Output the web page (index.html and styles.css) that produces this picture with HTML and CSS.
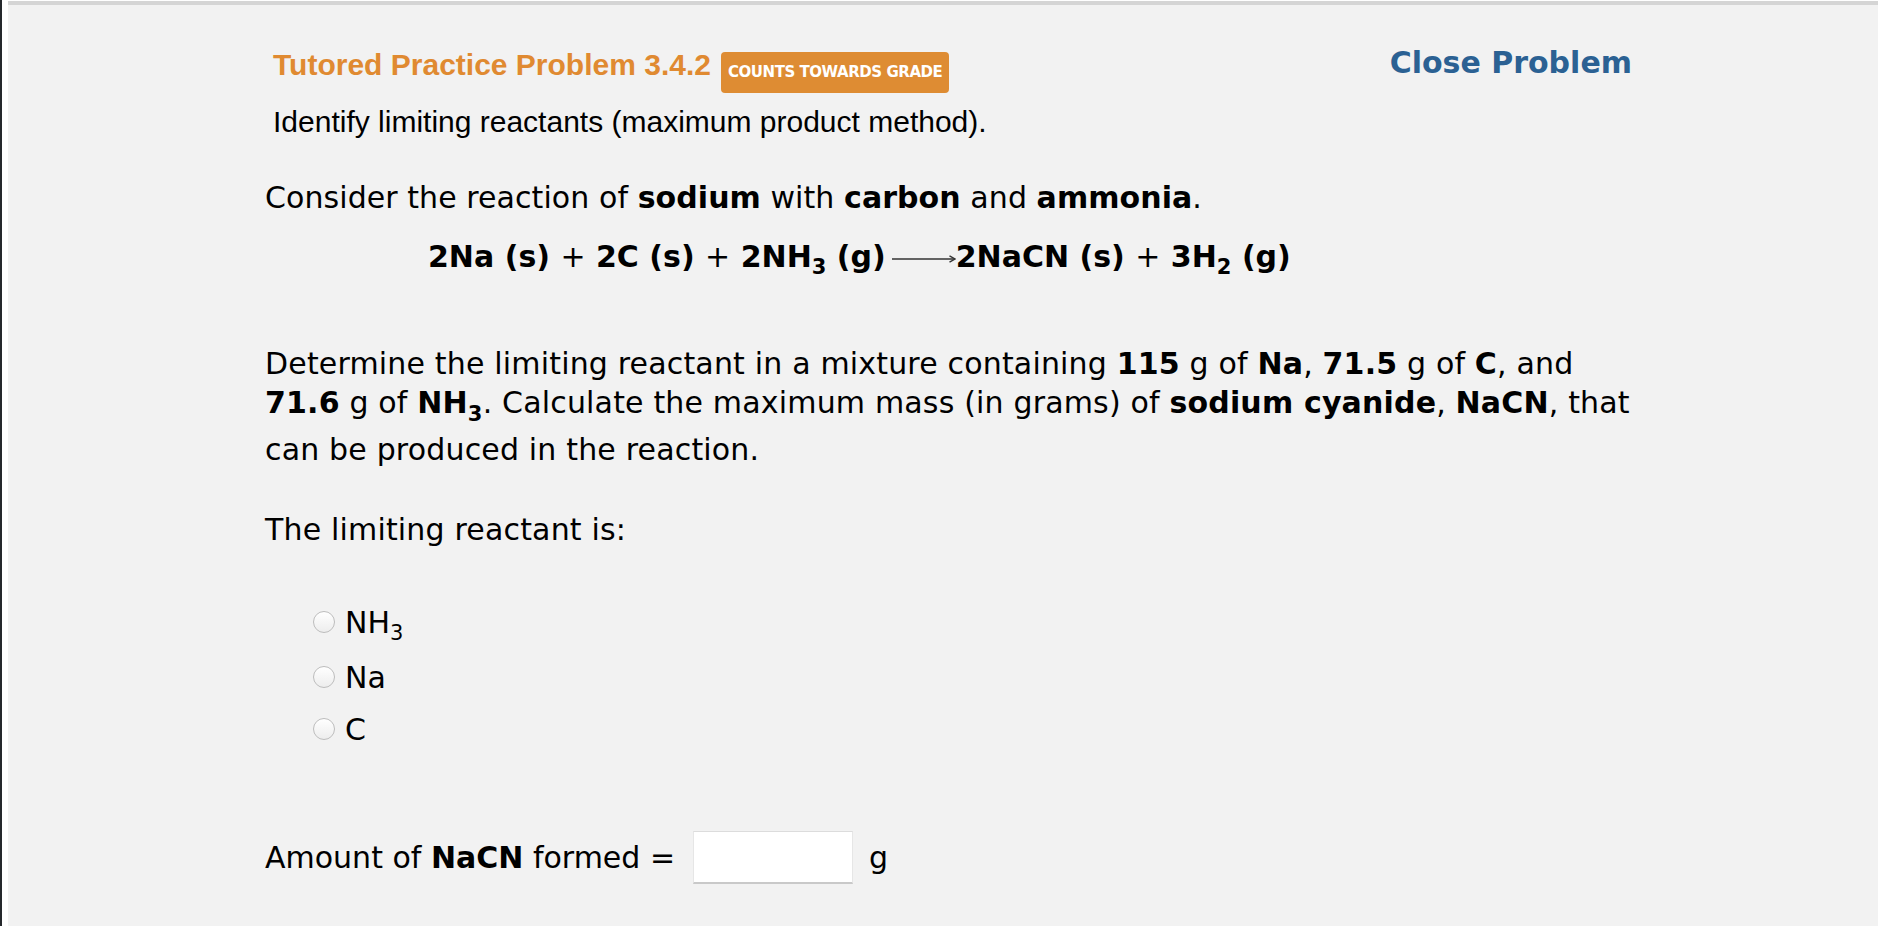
FILE: index.html
```html
<!DOCTYPE html>
<html lang="en">
<head>
<meta charset="utf-8">
<title>Tutored Practice Problem 3.4.2</title>
<link rel="stylesheet" href="styles.css">
</head>
<body>
<div class="frame">
  <div class="edge"></div>
  <div class="gutter"></div>
  <main class="main">
    <div class="content">
      <header class="header">
        <div class="title-group">
          <h1 class="title">Tutored Practice Problem 3.4.2</h1>
          <span class="badge">COUNTS TOWARDS GRADE</span>
        </div>
        <a class="close">Close Problem</a>
      </header>
      <p class="subtitle">Identify limiting reactants (maximum product method).</p>
      <p class="intro">Consider the reaction of <b>sodium</b> with <b>carbon</b> and <b>ammonia</b>.</p>
      <p class="equation">2Na (s) <span class="op">+</span> 2C (s) <span class="op">+</span> 2NH<sub>3</sub> (g)<svg class="arrow" width="64" height="12" viewBox="0 0 64 12"><path d="M0 6 H62.5" /><path d="M57.5 2.8 L63 6 L57.5 9.2" /></svg>2NaCN (s) <span class="op">+</span> 3H<sub>2</sub> (g)</p>
      <p class="question">Determine the limiting reactant in a mixture containing <b>115</b> g of <b>Na</b>, <b>71.5</b> g of <b>C</b>, and <b>71.6</b> g of <b>NH<sub>3</sub></b>. Calculate the maximum mass (in grams) of <b>sodium cyanide</b>, <b>NaCN</b>, that can be produced in the reaction.</p>
      <p class="prompt">The limiting reactant is:</p>
      <ul class="choices">
        <li class="choice"><span class="radio"></span><span class="label">NH<sub>3</sub></span></li>
        <li class="choice"><span class="radio"></span><span class="label">Na</span></li>
        <li class="choice"><span class="radio"></span><span class="label">C</span></li>
      </ul>
      <div class="answer">
        <span class="answer-label">Amount of <b>NaCN</b> formed =</span>
        <span class="input"></span>
        <span class="unit">g</span>
      </div>
    </div>
  </main>
</div>
</body>
</html>
```

FILE: styles.css
```css
* { box-sizing: border-box; }
html, body { margin: 0; height: 100%; }
body {
  background: #fff;
  font-family: "DejaVu Sans", Verdana, sans-serif;
  font-size: 30px;
  line-height: 1.3;
  color: #000;
}
.frame { display: flex; min-height: 100vh; }
.edge { width: 2px; background: #25282c; flex: none; }
.gutter { width: 6px; background: #fff; flex: none; }
.main {
  flex: 1;
  background: #f2f2f2;
  margin-top: 1px;
  border-top: 4px solid #d5d5d5;
  padding-top: 40px;
}
.content { margin-left: 257px; width: 1375px; }

.header {
  display: flex;
  justify-content: space-between;
  align-items: flex-start;
  padding: 0 8px;
}
.title-group { display: flex; align-items: flex-start; }
.title {
  margin: 2px 0 0;
  font-family: "Liberation Sans", Arial, sans-serif;
  font-weight: bold;
  font-size: 30px;
  line-height: 35px;
  color: #e08a31;
}
.badge {
  margin: 7px 0 0 10px;
  height: 41px;
  line-height: 41px;
  padding: 0 7px;
  background: #de8c33;
  color: #fff;
  font-weight: bold;
  font-size: 15px;
  letter-spacing: -0.45px;
  border-radius: 4px;
  white-space: nowrap;
}
.close {
  font-weight: bold;
  font-size: 30px;
  line-height: 35px;
  color: #2b6193;
  cursor: pointer;
}
.subtitle {
  margin: 11px 0 0 8px;
  font-family: "Liberation Sans", Arial, sans-serif;
  font-size: 30px;
  line-height: 35px;
}
p { margin: 0; }
.intro { letter-spacing: 0.07px; }
.question, .prompt { letter-spacing: 0.17px; }
sub {
  font-size: 21px;
  line-height: 1.5;
  vertical-align: -8px;
}
.intro { margin-top: 39px; }
.equation {
  margin-top: 20px;
  padding-left: 163px;
  font-weight: bold;
}
.equation sub { vertical-align: -7px; }
.op { font-weight: normal; }
.arrow {
  vertical-align: 2px;
  margin-left: 6px;
  fill: none;
  stroke: #333;
  stroke-width: 1.4;
}
.question { margin-top: 60px; }
.prompt { margin-top: 41px; }
.choices {
  list-style: none;
  margin: 54px 0 0;
  padding: 0 0 0 48px;
  display: flex;
  flex-direction: column;
  gap: 13px;
}
.choice { display: flex; align-items: flex-start; }
.choice sub { line-height: 1.1; vertical-align: -7px; }
.radio {
  flex: none;
  width: 22px;
  height: 22px;
  margin-top: 8px;
  border-radius: 50%;
  border: 1px solid #bdbdbd;
  background: linear-gradient(#ffffff, #ededed);
}
.label { margin-left: 10px; }
.answer {
  margin-top: 82px;
  display: flex;
  align-items: center;
}
.input {
  margin-left: 18px;
  width: 160px;
  height: 53px;
  background: #fff;
  border: 1px solid #e6e6e6;
  border-top-color: #dcdcdc;
  border-bottom: 2px solid #c9c9c9;
}
.unit { margin-left: 16px; }
```
